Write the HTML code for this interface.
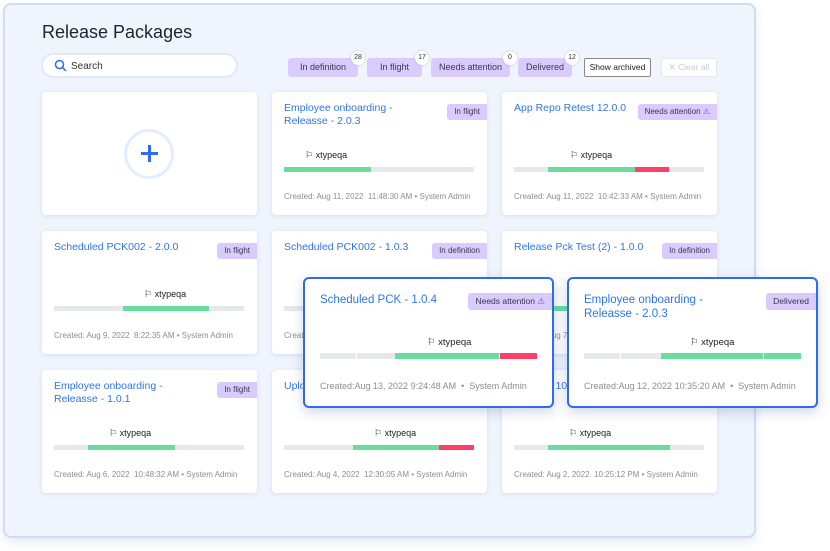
<!DOCTYPE html>
<html><head><meta charset="utf-8">
<style>
*{margin:0;padding:0;box-sizing:border-box}
body{width:830px;height:551px;background:#fff;font-family:"Liberation Sans",sans-serif;position:relative;overflow:hidden}
.panel{position:absolute;left:3px;top:3px;width:753px;height:535px;background:#eff4fd;border:2px solid #cfdcf6;border-radius:8px;box-shadow:0 4px 10px rgba(150,170,210,.25)}
.a{position:absolute}
h1{position:absolute;left:42px;top:22px;font-size:18px;font-weight:normal;color:#1f2430}
.search{position:absolute;left:41px;top:53px;width:197px;height:25px;border:2px solid #dfe9fb;background:#fff;border-radius:13px;font-size:10px;color:#333}
.chip{position:absolute;top:58px;height:19px;background:#d9cbfb;border-radius:3px;font-size:9px;color:#3a3550;text-align:center;line-height:19px}
.cnt{position:absolute;top:-7px;right:-7px;width:14px;height:14px;border-radius:7px;background:#fff;font-size:7px;line-height:14px;text-align:center;color:#333;box-shadow:0 0 2px rgba(0,0,0,.2)}
.card{position:absolute;width:215px;height:123px;background:#fff;border-radius:4px;box-shadow:0 1px 4px rgba(140,160,200,.25)}
.t{position:absolute;left:12px;top:10px;font-size:10.5px;line-height:13px;color:#2f74ee}
.b{position:absolute;right:0;top:12px;height:16px;line-height:16px;padding:0 7px;background:#d9cbfb;border-radius:3px 0 0 3px;font-size:8px;color:#3a3550}
.lab{position:absolute;top:58px;font-size:9px;color:#222;white-space:nowrap}
.bar{position:absolute;left:12px;top:75px;width:190px;height:5px;background:#e7e8ed}
.bar i{position:absolute;top:0;height:5px}
.g{background:#69dc9e}.r{background:#ff3f6a}.w{background:#fff}
.cr{position:absolute;left:12px;top:100px;font-size:8px;color:#8a8d95;white-space:nowrap}
.pop{position:absolute;width:251px;height:131px;background:#fff;border:2px solid #2f6bf0;border-radius:6px;box-shadow:0 4px 12px rgba(60,90,160,.25)}
.pop .t{left:15px;top:14px;font-size:11.5px;line-height:14px}
.pop .b{top:14px;height:17px;line-height:17px;font-size:8.5px}
.pop .lab{top:58px;font-size:9.5px}
.pop .bar{left:15px;top:74px;width:217px;height:6px}
.pop .bar i{height:6px}
.pop .cr{left:15px;top:102px;font-size:9px}
</style></head><body>
<div class="panel"></div>
<h1>Release Packages</h1>
<div class="search"><svg class="a" style="left:11px;top:4px" width="13" height="13" viewBox="0 0 13 13"><circle cx="5.5" cy="5.5" r="4" fill="none" stroke="#2f6bf0" stroke-width="1.5"/><path d="M8.5 8.5L12 12" stroke="#2f6bf0" stroke-width="1.5"/></svg><span class="a" style="left:28px;top:6px">Search</span></div>

<div class="chip" style="left:288px;width:70px">In definition<span class="cnt">28</span></div>
<div class="chip" style="left:367px;width:55px">In flight<span class="cnt">17</span></div>
<div class="chip" style="left:431px;width:79px">Needs attention<span class="cnt">0</span></div>
<div class="chip" style="left:518px;width:54px">Delivered<span class="cnt">12</span></div>
<div class="a" style="left:584px;top:58px;width:67px;height:19px;border:1px solid #888;border-radius:2px;background:#fff;font-size:8.5px;line-height:17px;text-align:center;color:#222">Show archived</div>
<div class="a" style="left:661px;top:58px;width:56px;height:19px;border:1px solid #e6e9ef;border-radius:2px;background:#fff;font-size:8.5px;line-height:17px;text-align:center;color:#c8cbd2">✕ Clear all</div>

<div class="card" style="left:42px;top:92px"><div class="a" style="left:82px;top:37px;width:50px;height:50px;border:3px solid #e3edfb;border-radius:50%"></div><div class="a" style="left:99px;top:60px;width:17px;height:3px;background:#2f6bf0"></div><div class="a" style="left:106px;top:53px;width:3px;height:17px;background:#2f6bf0"></div></div>

<div class="card" style="left:272px;top:92px"><div class="t">Employee onboarding -<br>Releasse - 2.0.3</div><div class="b">In flight</div><div class="lab" style="left:33px">⚐ xtypeqa</div><div class="bar"><i class="g" style="left:0;width:87px"></i></div><div class="cr">Created: Aug 11, 2022 &nbsp;11:48:30 AM • System Admin</div></div>

<div class="card" style="left:502px;top:92px"><div class="t">App Repo Retest 12.0.0</div><div class="b">Needs attention <span style="color:#7b4ee0">⚠</span></div><div class="lab" style="left:68px">⚐ xtypeqa</div><div class="bar"><i class="g" style="left:34px;width:87px"></i><i class="r" style="left:121px;width:34px"></i></div><div class="cr">Created: Aug 11, 2022 &nbsp;10:42:33 AM • System Admin</div></div>

<div class="card" style="left:42px;top:231px"><div class="t">Scheduled PCK002 - 2.0.0</div><div class="b">In flight</div><div class="lab" style="left:102px">⚐ xtypeqa</div><div class="bar"><i class="g" style="left:69px;width:86px"></i></div><div class="cr">Created: Aug 9, 2022 &nbsp;8:22:35 AM • System Admin</div></div>

<div class="card" style="left:272px;top:231px"><div class="t">Scheduled PCK002 - 1.0.3</div><div class="b">In definition</div><div class="bar"></div><div class="cr">Created</div></div>

<div class="card" style="left:502px;top:231px"><div class="t">Release Pck Test (2) - 1.0.0</div><div class="b">In definition</div><div class="bar"><i class="g" style="left:34px;width:60px"></i></div><div class="cr">Created: Aug 7</div></div>

<div class="card" style="left:42px;top:370px"><div class="t">Employee onboarding -<br>Releasse - 1.0.1</div><div class="b">In flight</div><div class="lab" style="left:67px">⚐ xtypeqa</div><div class="bar"><i class="g" style="left:34px;width:87px"></i></div><div class="cr">Created: Aug 6, 2022 &nbsp;10:48:32 AM • System Admin</div></div>

<div class="card" style="left:272px;top:370px"><div class="t">Upload</div><div class="lab" style="left:102px">⚐ xtypeqa</div><div class="bar"><i class="g" style="left:69px;width:86px"></i><i class="r" style="left:155px;width:35px"></i></div><div class="cr">Created: Aug 4, 2022 &nbsp;12:30:05 AM • System Admin</div></div>

<div class="card" style="left:502px;top:370px"><div class="t">Release 10.2</div><div class="lab" style="left:67px">⚐ xtypeqa</div><div class="bar"><i class="g" style="left:34px;width:122px"></i></div><div class="cr">Created: Aug 2, 2022 &nbsp;10:25:12 PM • System Admin</div></div>

<div class="pop" style="left:303px;top:277px"><div class="t">Scheduled PCK - 1.0.4</div><div class="b">Needs attention <span style="color:#7b4ee0">⚠</span></div><div class="lab" style="left:122px">⚐ xtypeqa</div><div class="bar"><i class="w" style="left:36px;width:1px"></i><i class="g" style="left:75px;width:104px"></i><i class="r" style="left:180px;width:37px"></i></div><div class="cr">Created:Aug 13, 2022 9:24:48 AM &nbsp;• &nbsp;System Admin</div></div>

<div class="pop" style="left:567px;top:277px"><div class="t">Employee onboarding -<br>Releasse - 2.0.3</div><div class="b">Delivered</div><div class="lab" style="left:121px">⚐ xtypeqa</div><div class="bar"><i class="w" style="left:36px;width:1px"></i><i class="g" style="left:77px;width:102px"></i><i class="g" style="left:180px;width:37px"></i></div><div class="cr">Created:Aug 12, 2022 10:35:20 AM &nbsp;• &nbsp;System Admin</div></div>
</body></html>
